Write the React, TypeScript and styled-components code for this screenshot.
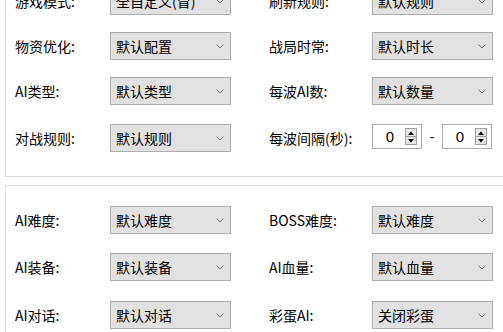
import React from "react";
import styled, { createGlobalStyle } from "styled-components";

const Global = createGlobalStyle`
  html, body { margin: 0; padding: 0; background: #ffffff; overflow: hidden; }
  body { font-family: "Noto Sans CJK SC", "Noto Sans", sans-serif; font-size: 14px; color: #000; }
`;

const Page = styled.div`
  display: flex;
  flex-direction: column;
  gap: 8px;
  margin-top: -34px;
  padding-left: 5px;
  width: 540px;
`;

const Group = styled.div<{ $gap: number; $pb: number }>`
  border: 1px solid #dcdcdc;
  padding: 20px 0 ${(p) => p.$pb}px 9px;
  display: flex;
  flex-direction: column;
  gap: ${(p) => p.$gap}px;
`;

const Row = styled.div<{ $mt?: number }>`
  display: flex;
  align-items: center;
  height: 28px;
  margin-top: ${(p) => p.$mt ?? 0}px;
`;

const Label = styled.div<{ $w: number; $ml?: number }>`
  width: ${(p) => p.$w}px;
  margin-left: ${(p) => p.$ml ?? 0}px;
  white-space: nowrap;
  line-height: 28px;
`;

const SelectBox = styled.div`
  box-sizing: border-box;
  width: 121px;
  height: 28px;
  border: 1px solid #adadad;
  background: #e1e1e1;
  display: flex;
  align-items: center;
  justify-content: space-between;
  padding: 0 6px 0 5px;
  white-space: nowrap;
`;

const Chevron = () => (
  <svg width="8" height="5" viewBox="0 0 8 5">
    <path d="M0.5 0.5 L4 4 L7.5 0.5" fill="none" stroke="#707070" strokeWidth="1" />
  </svg>
);

const Select = ({ value }: { value: string }) => (
  <SelectBox>
    <span>{value}</span>
    <Chevron />
  </SelectBox>
);

const SpinGroup = styled.div`
  display: flex;
  align-items: center;
  align-self: flex-start;
`;

const SpinBox = styled.div`
  box-sizing: border-box;
  width: 50px;
  height: 25px;
  border: 1px solid #adadad;
  background: #fff;
  display: flex;
  align-items: center;
  padding: 0 4px 0 0;
`;

const SpinValue = styled.span`
  flex: 1;
  text-align: center;
  font-family: "Liberation Sans", Arial, sans-serif;
  font-size: 15px;
  padding-left: 2px;
`;

const SpinButtons = styled.div`
  display: flex;
  flex-direction: column;
  width: 12px;
  height: 17px;
  border: 1px solid #a0a0a0;
  box-sizing: border-box;
  background: #e6e6e6;
`;

const SpinHalf = styled.div<{ $top?: boolean }>`
  flex: 1;
  display: flex;
  align-items: center;
  justify-content: center;
  border-top: ${(p) => (p.$top ? "none" : "1px solid #a0a0a0")};
`;

const Dash = styled.span`
  width: 20px;
  text-align: center;
  font-family: "Liberation Sans", Arial, sans-serif;
`;

const Spinner = () => (
  <SpinBox>
    <SpinValue>0</SpinValue>
    <SpinButtons>
      <SpinHalf $top>
        <svg width="6" height="4" viewBox="0 0 6 4">
          <path d="M0 4 L3 0.5 L6 4 Z" fill="#000" />
        </svg>
      </SpinHalf>
      <SpinHalf>
        <svg width="6" height="4" viewBox="0 0 6 4">
          <path d="M0 0 L3 3.5 L6 0 Z" fill="#000" />
        </svg>
      </SpinHalf>
    </SpinButtons>
  </SpinBox>
);

export default function App() {
  return (
    <>
      <Global />
      <Page>
        <Group $gap={17} $pb={24}>
          <Row>
            <Label $w={95}>游戏模式:</Label>
            <Select value="全自定义(冒)" />
            <Label $w={103} $ml={38}>刷新规则:</Label>
            <Select value="默认规则" />
          </Row>
          <Row>
            <Label $w={95}>物资优化:</Label>
            <Select value="默认配置" />
            <Label $w={103} $ml={38}>战局时常:</Label>
            <Select value="默认时长" />
          </Row>
          <Row>
            <Label $w={95}>AI类型:</Label>
            <Select value="默认类型" />
            <Label $w={103} $ml={38}>每波AI数:</Label>
            <Select value="默认数量" />
          </Row>
          <Row $mt={2}>
            <Label $w={95}>对战规则:</Label>
            <Select value="默认规则" />
            <Label $w={103} $ml={38}>每波间隔(秒):</Label>
            <SpinGroup>
              <Spinner />
              <Dash>-</Dash>
              <Spinner />
            </SpinGroup>
          </Row>
        </Group>
        <Group $gap={19} $pb={24}>
          <Row>
            <Label $w={95}>AI难度:</Label>
            <Select value="默认难度" />
            <Label $w={103} $ml={38}>BOSS难度:</Label>
            <Select value="默认难度" />
          </Row>
          <Row>
            <Label $w={95}>AI装备:</Label>
            <Select value="默认装备" />
            <Label $w={103} $ml={38}>AI血量:</Label>
            <Select value="默认血量" />
          </Row>
          <Row $mt={1}>
            <Label $w={95}>AI对话:</Label>
            <Select value="默认对话" />
            <Label $w={103} $ml={38}>彩蛋AI:</Label>
            <Select value="关闭彩蛋" />
          </Row>
        </Group>
      </Page>
    </>
  );
}
